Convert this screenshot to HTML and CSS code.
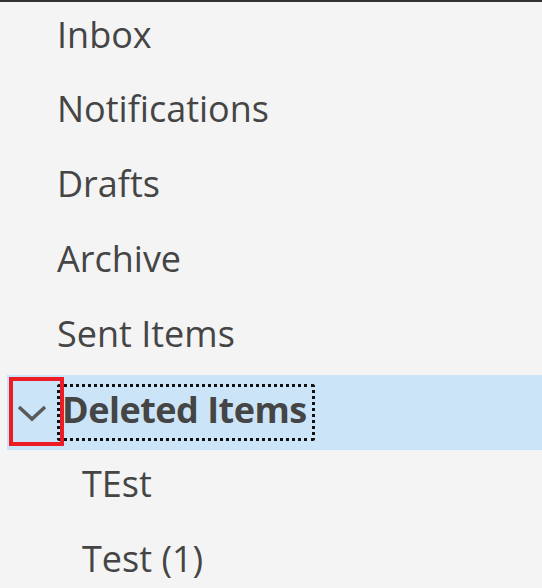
FILE: index.html
```html
<!DOCTYPE html>
<html lang="en">
<head>
    <meta charset="UTF-8">
    <title>Folders</title>
    <link rel="stylesheet" href="styles.css">
</head>
<body>

    <ul class="folders">
        <li class="folder">Inbox</li>
        <li class="folder">Notifications</li>
        <li class="folder">Drafts</li>
        <li class="folder">Archive</li>
        <li class="folder">Sent Items</li>
        <li class="folder selected">
            <span class="toggle">
                <svg width="30" height="18" viewBox="0 0 30 18"><polyline points="2,3 15,15 28,3" fill="none" stroke="#5a5a5a" stroke-width="3.5"/></svg>
            </span>
            <span class="focus">Deleted Items</span>
            <span class="marker"></span>
        </li>
        <li class="folder sub">TEst</li>
        <li class="folder sub">Test (1)</li>
    </ul>

</body>
</html>
```

FILE: styles.css
```css
body {
    margin: 0;
    background-color: #f4f4f4;
    border-top: 2px solid #333;
    font-family: "Open Sans", "Noto Sans", sans-serif;
    color: #454545;
    overflow: hidden;
}
.folders {
    list-style: none;
    margin: 0;
    padding: 0;
}
.folder {
    height: 75px;
    display: flex;
    align-items: center;
    padding-left: 57px;
    padding-bottom: 8px;
    box-sizing: border-box;
    font-size: 36px;
}
.folder:first-child {
    height: 73px;
}
.sub {
    padding-left: 82px;
}
.selected {
    position: relative;
    margin-left: 7px;
    padding-left: 0;
    padding-bottom: 0;
    background-color: #cce4f7;
    font-weight: bold;
}
.toggle {
    width: 50px;
    flex-shrink: 0;
    display: flex;
    justify-content: center;
}
.focus {
    border: 3px dotted #111;
    border-radius: 3px;
    padding: 0 5px 6px 2px;
    height: 57px;
    box-sizing: border-box;
    display: flex;
    align-items: center;
    letter-spacing: -0.5px;
}
.marker {
    position: absolute;
    left: 2px;
    top: 2px;
    width: 55px;
    height: 69px;
    border: 4px solid #ed1c24;
    box-sizing: border-box;
}
```
